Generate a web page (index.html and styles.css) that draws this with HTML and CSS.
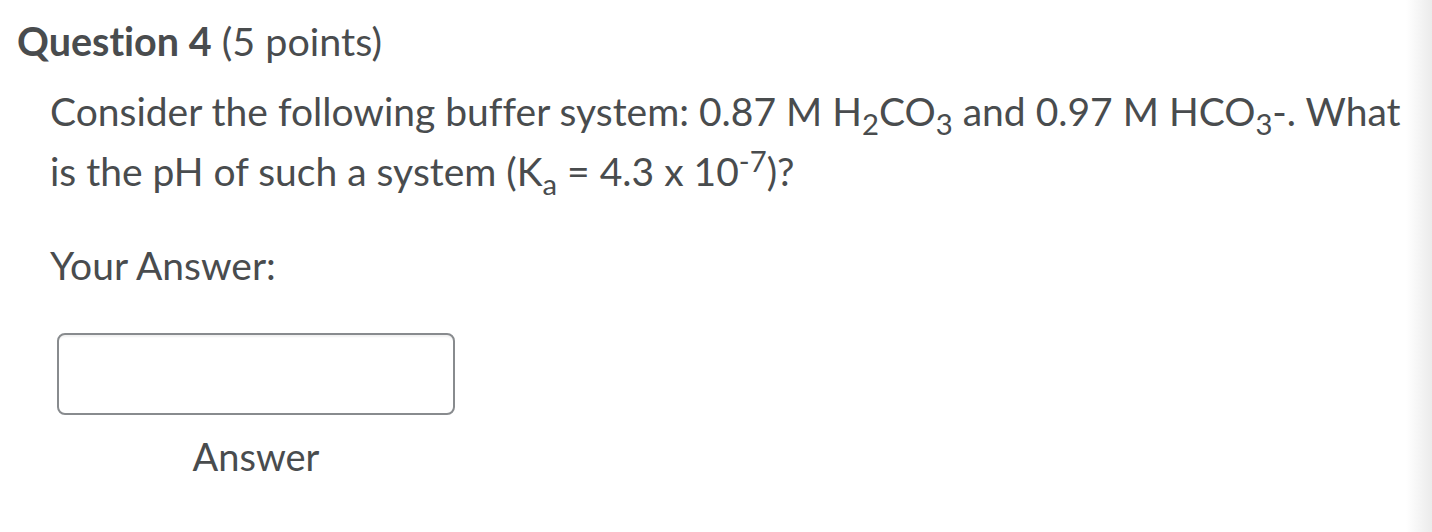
FILE: index.html
```html
<!DOCTYPE html>
<html>
<head>
<meta charset="utf-8">
<link rel="stylesheet" href="styles.css">
</head>
<body>
<div class="page">
  <div class="content">
    <h2 class="qtitle"><strong>Question 4</strong> <span class="pts">(5 points)</span></h2>
    <div class="qbody">
      <p class="qtext">Consider the following buffer system: 0.87 M H<sub>2</sub>CO<sub>3</sub> and 0.97 M HCO<sub>3</sub>-. What is the pH of such a system (K<sub>a</sub> = 4.3 x 10<sup>-7</sup>)?</p>
      <p class="label">Your Answer:</p>
      <div class="answer">
        <div class="inputbox"></div>
        <div class="caption">Answer</div>
      </div>
    </div>
  </div>
  <div class="edge"></div>
</div>
</body>
</html>
```
FILE: styles.css
```css
html, body {
  margin: 0;
  padding: 0;
  background: #ffffff;
}
body {
  font-family: Lato, "Open Sans", sans-serif;
  color: #494c4e;
  font-variant-ligatures: none;
}
.page {
  position: relative;
  width: 1432px;
  height: 532px;
  overflow: hidden;
}
.content {
  padding: 17px 0 0 17px;
}
.edge {
  position: absolute;
  top: 0;
  right: 0;
  bottom: 0;
  width: 26px;
  background: linear-gradient(to right, rgba(236,236,236,0), #ebebeb);
}
.qtitle {
  margin: 0;
  font-size: 39.5px;
  font-weight: 400;
  line-height: 47px;
}
.qtitle strong {
  font-weight: 700;
}
.qbody {
  padding-left: 33px;
}
.qtext {
  width: 1375px;
  margin: 17px 0 0 0;
  font-size: 39px;
  line-height: 60px;
}
.qtext sub, .qtext sup {
  font-size: 75%;
  line-height: 0;
}
.label {
  margin: 34px 0 0 0;
  font-size: 39px;
  line-height: 60px;
}
.answer {
  margin-top: 38px;
  margin-left: 7px;
  width: 398px;
  display: flex;
  flex-direction: column;
  align-items: center;
}
.inputbox {
  box-sizing: border-box;
  width: 398px;
  height: 82px;
  border: 2px solid #888b8e;
  border-radius: 8px;
  box-shadow: inset 0 4px 2px -2px rgba(0,0,0,0.06);
  background: #ffffff;
}
.caption {
  margin-top: 18px;
  font-size: 38px;
  line-height: 47px;
}
```
